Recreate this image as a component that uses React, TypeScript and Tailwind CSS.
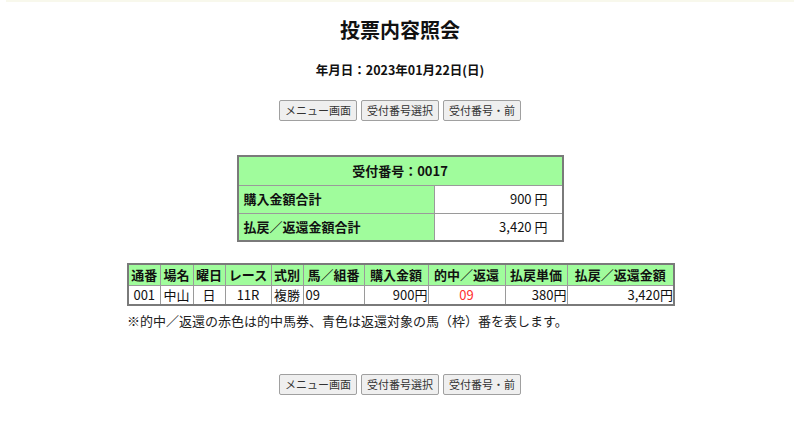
import React from 'react';

const font = { fontFamily: '"Noto Sans CJK JP", "Noto Sans", sans-serif' };

const NavButtons: React.FC = () => {
  const btn =
    'h-[21px] px-[5px] text-[11px] leading-none text-[#333] bg-[#efefef] border border-[#a0a0a0] rounded-[2px]';
  return (
    <div className="flex justify-center gap-[4px]">
      <button className={btn}>メニュー画面</button>
      <button className={btn}>受付番号選択</button>
      <button className={btn}>受付番号・前</button>
    </div>
  );
};

const headers = ['通番', '場名', '曜日', 'レース', '式別', '馬／組番', '購入金額', '的中／返還', '払戻単価', '払戻／返還金額'];
const widths = ['w-[32px]', 'w-[33px]', 'w-[32px]', 'w-[46px]', 'w-[32px]', 'w-[61px]', 'w-[64px]', 'w-[77px]', 'w-[62px]', 'w-[107px]'];

export default function App() {
  const cell = 'border border-[#9a9a9a] px-[2px] whitespace-nowrap';
  return (
    <div className="w-[800px] h-[434px] bg-white text-[#111]" style={font}>
      <div className="mx-[6px] h-[2px] bg-[#f8f8ec]" />
      <h1 className="mt-[14px] text-center text-[20px] font-bold leading-[28px]">投票内容照会</h1>
      <div className="mt-[15px] text-center text-[12.5px] font-bold leading-[22px]">年月日：2023年01月22日(日)</div>
      <div className="mt-[19px]">
        <NavButtons />
      </div>

      <div className="mt-[34px] flex justify-center">
        <table className="w-[327px] border-collapse border-2 border-[#7a7a7a] text-[13px]">
          <tbody>
            <tr className="h-[29px] bg-[#a0fc9c]">
              <th colSpan={2} className="border border-[#9a9a9a] font-bold">受付番号：0017</th>
            </tr>
            <tr className="h-[28px]">
              <th className="w-[197px] border border-[#9a9a9a] bg-[#a0fc9c] pl-[5px] text-left font-bold">購入金額合計</th>
              <td className="border border-[#9a9a9a] bg-white pr-[14px] text-right">900 円</td>
            </tr>
            <tr className="h-[28px]">
              <th className="border border-[#9a9a9a] bg-[#a0fc9c] pl-[5px] text-left font-bold">払戻／返還金額合計</th>
              <td className="border border-[#9a9a9a] bg-white pr-[14px] text-right">3,420 円</td>
            </tr>
          </tbody>
        </table>
      </div>

      <div className="mt-[21px] flex justify-center">
        <div className="w-[546px]">
          <table className="w-[546px] table-fixed border-collapse border-2 border-[#7a7a7a] text-[13px] leading-[18px]">
            <tbody>
              <tr className="h-[21px] bg-[#a0fc9c]">
                {headers.map((h, i) => (
                  <th key={h} className={`border border-[#9a9a9a] px-0 ${widths[i]} whitespace-nowrap font-bold`}>
                    {h}
                  </th>
                ))}
              </tr>
              <tr className="h-[20px] bg-white">
                <td className={`${cell} text-center`}>001</td>
                <td className={`${cell} text-center`}>中山</td>
                <td className={`${cell} text-center`}>日</td>
                <td className={`${cell} text-center`}>11R</td>
                <td className={`${cell} text-center`}>複勝</td>
                <td className={`${cell} text-left`}>09</td>
                <td className={`${cell} text-right !px-0`}>900円</td>
                <td className={`${cell} text-center text-[#ff3030]`}>09</td>
                <td className={`${cell} text-right !px-0`}>380円</td>
                <td className={`${cell} text-right !px-0`}>3,420円</td>
              </tr>
            </tbody>
          </table>
          <p className="mt-[5px] text-[13px] leading-[20px] text-[#222]">
            ※的中／返還の赤色は的中馬券、青色は返還対象の馬（枠）番を表します。
          </p>
        </div>
      </div>

      <div className="mt-[43px]">
        <NavButtons />
      </div>
    </div>
  );
}
